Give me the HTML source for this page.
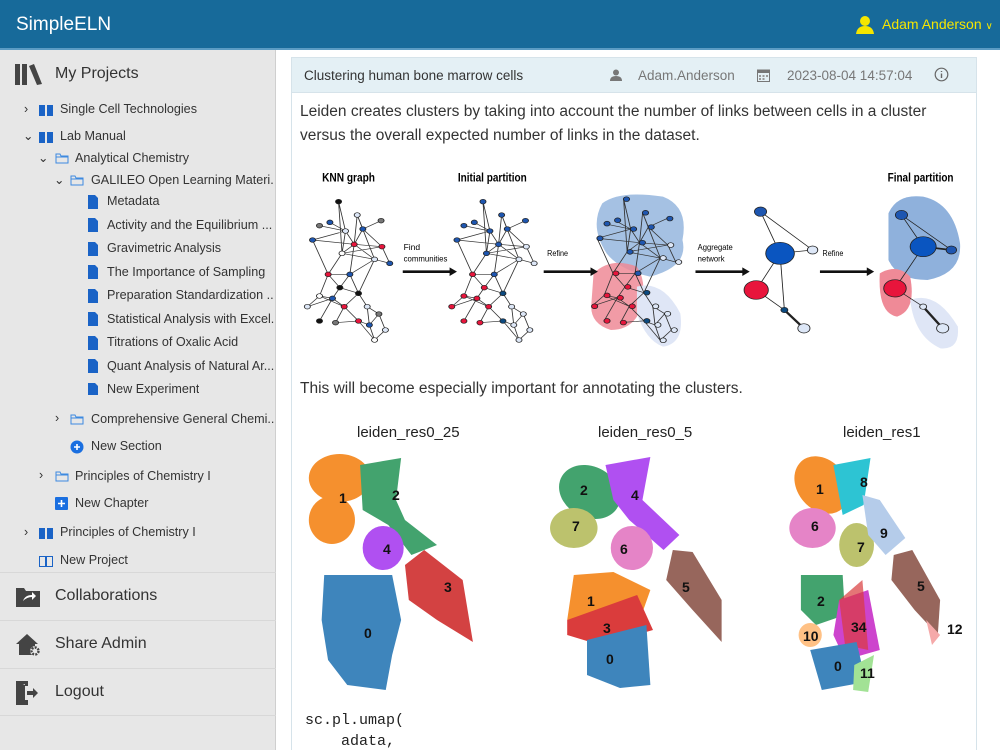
<!DOCTYPE html>
<html><head><meta charset="utf-8"><style>
*{box-sizing:border-box;margin:0;padding:0}
html,body{width:1000px;height:750px;overflow:hidden}
body{font-family:"Liberation Sans",sans-serif;background:#fff;position:relative}
.hdr{position:absolute;left:0;top:0;width:1000px;height:50px;background:#176a9a;border-bottom:2px solid #5b9cc4}
.hdr .t{position:absolute;left:16px;top:14px;color:#fff;font-size:19px}
.hdr .u{position:absolute;top:16px;color:#f5e600;font-size:14px;white-space:nowrap}
.side{position:absolute;left:0;top:50px;width:276px;height:700px;background:#e7e7e7;border-right:1px solid #cfcfcf}
.it{position:absolute;font-size:12.6px;color:#333;white-space:nowrap;overflow:hidden;max-width:calc(274px - var(--l,0px))}
.big{position:absolute;left:0;width:276px;height:48px;border-top:1px solid #d8d8d8;font-size:16px;color:#333}
.big span{position:absolute;left:55px;top:14px}
.card{position:absolute;left:291px;top:57px;width:686px;height:693px;border:1px solid #d6e3ea;border-bottom:none}
.ch{height:35px;background:#e4f0f5;border-bottom:1px solid #d6e3ea;font-size:13.5px;color:#333;position:relative}
.ch span{position:absolute;top:10px}
p.x{position:absolute;left:300px;font-size:15.5px;color:#333;line-height:24px}
.lt{position:absolute;font-size:15px;color:#222;top:424px}
</style></head><body>
<div class="hdr"><div class="t">SimpleELN</div>
<svg style="position:absolute;left:855px;top:15px" width="20" height="20" viewBox="0 0 20 20"><circle cx="10" cy="6" r="5" fill="#f5e600"/><path d="M1 19 Q2 11 10 11 Q18 11 19 19Z" fill="#f5e600"/></svg>
<div class="u" style="left:882px">Adam Anderson <span style="font-size:10px">&#8744;</span></div></div>

<div class="side">
<svg style="position:absolute;left:15px;top:13px" width="28" height="22" viewBox="0 0 28 22"><rect x="0" y="1" width="5" height="21" fill="#444"/><rect x="7" y="1" width="5" height="21" fill="#444"/><path d="M14 3 L19 1 L27 21 L22 22Z" fill="#444"/></svg>
<div class="it" style="left:55px;top:15px;font-size:16px">My Projects</div>
</div>
<div class="it" style="left:24px;top:102px">›</div>
<svg style="position:absolute;left:39px;top:104px" width="14" height="12"><path d="M0 1 h6 v11 h-6z M8 1 h6 v11 h-6z" fill="#1a63c6"/></svg>
<div class="it" style="left:60px;top:102px">Single Cell Technologies</div>
<div class="it" style="left:23px;top:128px">⌄</div>
<svg style="position:absolute;left:39px;top:131px" width="14" height="12"><path d="M0 1 h6 v11 h-6z M8 1 h6 v11 h-6z" fill="#1a63c6"/></svg>
<div class="it" style="left:60px;top:129px">Lab Manual</div>
<div class="it" style="left:38px;top:150px">⌄</div>
<svg style="position:absolute;left:55px;top:152px" width="14" height="12"><path d="M1 2h4l1 2h7v7h-12z M1 5h12" fill="none" stroke="#3d8ae0"/></svg>
<div class="it" style="left:75px;top:151px">Analytical Chemistry</div>
<div class="it" style="left:54px;top:172px">⌄</div>
<svg style="position:absolute;left:70px;top:174px" width="14" height="12"><path d="M1 2h4l1 2h7v7h-12z M1 5h12" fill="none" stroke="#3d8ae0"/></svg>
<div class="it" style="left:91px;top:173px;--l:91px">GALILEO Open Learning Materi...</div>

<svg style="position:absolute;left:87px;top:195px" width="12" height="200">
<g fill="#1a63c6"><path d="M1 0h7l3 3v11h-10z"/><path d="M1 23h7l3 3v11h-10z"/><path d="M1 47h7l3 3v11h-10z"/><path d="M1 70h7l3 3v11h-10z"/><path d="M1 94h7l3 3v11h-10z"/><path d="M1 117h7l3 3v11h-10z"/><path d="M1 141h7l3 3v11h-10z"/><path d="M1 164h7l3 3v11h-10z"/><path d="M1 188h7l3 3v11h-10z"/></g></svg>
<div class="it" style="left:107px;top:194px;--l:107px">Metadata</div>
<div class="it" style="left:107px;top:218px;--l:107px">Activity and the Equilibrium ...</div>
<div class="it" style="left:107px;top:241px;--l:107px">Gravimetric Analysis</div>
<div class="it" style="left:107px;top:265px;--l:107px">The Importance of Sampling</div>
<div class="it" style="left:107px;top:288px;--l:107px">Preparation Standardization ...</div>
<div class="it" style="left:107px;top:312px;--l:107px">Statistical Analysis with Excel...</div>
<div class="it" style="left:107px;top:335px;--l:107px">Titrations of Oxalic Acid</div>
<div class="it" style="left:107px;top:359px;--l:107px">Quant Analysis of Natural Ar...</div>
<div class="it" style="left:107px;top:382px;--l:107px">New Experiment</div>
<div class="it" style="left:55px;top:411px">›</div>
<svg style="position:absolute;left:70px;top:413px" width="14" height="12"><path d="M1 2h4l1 2h7v7h-12z M1 5h12" fill="none" stroke="#3d8ae0"/></svg>
<div class="it" style="left:91px;top:412px;--l:91px">Comprehensive General Chemi...</div>
<svg style="position:absolute;left:70px;top:440px" width="14" height="14"><circle cx="7" cy="7" r="6.5" fill="#1a6fe0"/><path d="M7 4v6M4 7h6" stroke="#fff" stroke-width="1.6"/></svg>
<div class="it" style="left:91px;top:439px">New Section</div>
<div class="it" style="left:39px;top:468px">›</div>
<svg style="position:absolute;left:55px;top:470px" width="14" height="12"><path d="M1 2h4l1 2h7v7h-12z M1 5h12" fill="none" stroke="#3d8ae0"/></svg>
<div class="it" style="left:75px;top:469px">Principles of Chemistry I</div>
<svg style="position:absolute;left:55px;top:497px" width="13" height="13"><rect width="13" height="13" rx="1" fill="#1a6fe0"/><path d="M6.5 3v7M3 6.5h7" stroke="#fff" stroke-width="1.6"/></svg>
<div class="it" style="left:75px;top:496px">New Chapter</div>
<div class="it" style="left:24px;top:525px">›</div>
<svg style="position:absolute;left:39px;top:527px" width="14" height="12"><path d="M0 1 h6 v11 h-6z M8 1 h6 v11 h-6z" fill="#1a63c6"/></svg>
<div class="it" style="left:60px;top:525px">Principles of Chemistry I</div>
<svg style="position:absolute;left:39px;top:555px" width="14" height="12"><path d="M0.5 1.5 h6 v10 h-6z M7.5 1.5 h6 v10 h-6z" fill="none" stroke="#1a63c6"/></svg>
<div class="it" style="left:60px;top:553px">New Project</div>

<div class="big" style="top:572px"><svg style="position:absolute;left:16px;top:13px" width="24" height="21"><path d="M0 2h8l2 3h14v16h-24z" fill="#444"/><path d="M7 15 q2-6 9-6 v-3 l4 4-4 4v-3q-5 0-9 4z" fill="#fff"/></svg><span>Collaborations</span></div>
<div class="big" style="top:620px"><svg style="position:absolute;left:16px;top:12px" width="26" height="24"><path d="M0 11 L11 1 L22 11 H19 V22 H3 V11Z" fill="#444"/><circle cx="19" cy="18" r="5" fill="#e7e7e7"/><circle cx="19" cy="18" r="3.5" fill="none" stroke="#444" stroke-width="2.4" stroke-dasharray="2 1.2"/></svg><span>Share Admin</span></div>
<div class="big" style="top:668px;border-bottom:1px solid #d8d8d8"><svg style="position:absolute;left:16px;top:12px" width="24" height="24"><path d="M0 0h12v5h-3v-2h-6v18h6v-2h3v5h-12z" fill="#444"/><path d="M2 1l7 3v19l-7-1z" fill="#444"/><path d="M11 10h6v-3l5 5-5 5v-3h-6z" fill="#444"/></svg><span>Logout</span></div>

<div class="card"><div class="ch">
<span style="left:12px">Clustering human bone marrow cells</span>
<svg style="position:absolute;left:318px;top:11px" width="12" height="12"><circle cx="6" cy="3.5" r="3" fill="#777"/><path d="M0 12q0-5 6-5 6 0 6 5z" fill="#777"/></svg>
<span style="left:346px;color:#777">Adam.Anderson</span>
<svg style="position:absolute;left:465px;top:10px" width="13" height="14"><rect x="0.5" y="2" width="12" height="11.5" fill="none" stroke="#777"/><rect x="0.5" y="2" width="12" height="3" fill="#777"/><g fill="#999"><rect x="2" y="7" width="2" height="2"/><rect x="5.5" y="7" width="2" height="2"/><rect x="9" y="7" width="2" height="2"/><rect x="2" y="10" width="2" height="2"/><rect x="5.5" y="10" width="2" height="2"/></g></svg>
<span style="left:495px;color:#777">2023-08-04 14:57:04</span>
<svg style="position:absolute;left:642px;top:9px" width="15" height="15"><circle cx="7.5" cy="7.5" r="6.3" fill="none" stroke="#666" stroke-width="1.2"/><path d="M7.5 6.5v4.5M7.5 4v1" stroke="#666" stroke-width="1.4"/></svg>
</div></div>

<p class="x" style="top:100px">Leiden creates clusters by taking into account the number of links between cells in a cluster<br>versus the overall expected number of links in the dataset.</p>
<p class="x" style="top:377px">This will become especially important for annotating the clusters.</p>

<svg style="position:absolute;left:290px;top:160px" width="680" height="200" viewBox="0 0 1568 600" preserveAspectRatio="none">
<defs><g id="ed" stroke="#333" stroke-width="2" fill="none">
<path d="M112 125L128 213L148 253L155 165L168 207L210 182M92 187L128 213L52 240L148 253L212 260L168 207L148 253L195 298L230 310L212 260M68 197L128 213L120 280L148 253L138 343L88 343L120 280L195 298L138 343L115 383L88 343L68 408L98 415L115 383L158 400L138 343M40 440L68 408L125 440L98 415L68 483M125 440L105 488L158 483L125 440L158 400L178 440L205 462L220 510L195 540L158 483L183 495L205 462M178 440L183 495L195 540M112 125L120 280M155 165L195 298M52 240L88 343M212 260L120 280M40 440L98 415M158 400L195 298"/></g></defs>
<g font-family="Liberation Sans" font-weight="bold" font-size="36">
<text x="74" y="65" textLength="122" lengthAdjust="spacingAndGlyphs">KNN graph</text>
<text x="387" y="65" textLength="159" lengthAdjust="spacingAndGlyphs">Initial partition</text>
<text x="1378" y="65" textLength="152" lengthAdjust="spacingAndGlyphs">Final partition</text></g>
<use href="#ed"/><use href="#ed" x="333"/>
<path d="M720 130Q760 90 860 110Q920 140 905 240Q920 320 830 350Q760 330 730 280Q690 200 720 130Z" fill="#8fb1dc" opacity=".8"/>
<path d="M700 340Q740 290 800 320Q830 380 800 470Q780 510 740 510Q690 490 695 430Z" fill="#ef8a97" opacity=".85"/>
<path d="M800 380Q860 360 900 460Q910 550 860 560Q820 540 800 460Z" fill="#dfe6f6"/>
<g transform="translate(655,-10) scale(1.02)"><use href="#ed"/></g>
<path d="M260 335H370" stroke="#111" stroke-width="8"/><path d="M368 322L385 335L368 348Z" fill="#111"/>
<path d="M585 335H695" stroke="#111" stroke-width="8"/><path d="M693 322L710 335L693 348Z" fill="#111"/>
<path d="M935 335H1045" stroke="#111" stroke-width="8"/><path d="M1043 322L1060 335L1043 348Z" fill="#111"/>
<path d="M1222 335H1332" stroke="#111" stroke-width="8"/><path d="M1330 322L1347 335L1330 348Z" fill="#111"/>
<g font-size="24" font-family="Liberation Sans"><text x="262" y="270" textLength="38" lengthAdjust="spacingAndGlyphs">Find</text><text x="262" y="305" textLength="101" lengthAdjust="spacingAndGlyphs">communities</text><text x="593" y="288" textLength="48" lengthAdjust="spacingAndGlyphs">Refine</text><text x="940" y="270" textLength="81" lengthAdjust="spacingAndGlyphs">Aggregate</text><text x="940" y="305" textLength="62" lengthAdjust="spacingAndGlyphs">network</text><text x="1228" y="288" textLength="48" lengthAdjust="spacingAndGlyphs">Refine</text></g>
<g stroke="#222" stroke-width="2">
<circle cx="112" cy="125" r="7" fill="#111"/><circle cx="155" cy="165" r="7" fill="#dde7f7"/><circle cx="210" cy="182" r="7" fill="#777"/><circle cx="92" cy="187" r="7" fill="#1e56b0"/><circle cx="68" cy="197" r="7" fill="#777"/><circle cx="128" cy="213" r="7" fill="#dde7f7"/><circle cx="168" cy="207" r="7" fill="#1e56b0"/><circle cx="52" cy="240" r="7" fill="#1e56b0"/><circle cx="148" cy="253" r="7" fill="#e8153c"/><circle cx="212" cy="260" r="7" fill="#e8153c"/><circle cx="120" cy="280" r="7" fill="#fff"/><circle cx="195" cy="298" r="7" fill="#dde7f7"/><circle cx="230" cy="310" r="7" fill="#1e56b0"/><circle cx="88" cy="343" r="7" fill="#e8153c"/><circle cx="138" cy="343" r="7" fill="#1e56b0"/><circle cx="115" cy="383" r="7" fill="#111"/><circle cx="158" cy="400" r="7" fill="#111"/><circle cx="68" cy="408" r="7" fill="#fff"/><circle cx="98" cy="415" r="7" fill="#1e56b0"/><circle cx="40" cy="440" r="7" fill="#dde7f7"/><circle cx="125" cy="440" r="7" fill="#e8153c"/><circle cx="178" cy="440" r="7" fill="#dde7f7"/><circle cx="205" cy="462" r="7" fill="#777"/><circle cx="68" cy="483" r="7" fill="#111"/><circle cx="105" cy="488" r="7" fill="#777"/><circle cx="158" cy="483" r="7" fill="#e8153c"/><circle cx="183" cy="495" r="7" fill="#1e56b0"/><circle cx="220" cy="510" r="7" fill="#dde7f7"/><circle cx="195" cy="540" r="7" fill="#fff"/>
</g>
<g id="pn" stroke="#222" stroke-width="2" transform="translate(333,0)" fill="#1e56b0">
<circle cx="112" cy="125" r="7"/><circle cx="155" cy="165" r="7"/><circle cx="210" cy="182" r="7"/><circle cx="92" cy="187" r="7"/><circle cx="68" cy="197" r="7"/><circle cx="128" cy="213" r="7"/><circle cx="168" cy="207" r="7"/><circle cx="52" cy="240" r="7"/><circle cx="148" cy="253" r="7"/><circle cx="212" cy="260" r="7" fill="#dde7f7"/><circle cx="120" cy="280" r="7"/><circle cx="195" cy="298" r="7" fill="#dde7f7"/><circle cx="230" cy="310" r="7" fill="#dde7f7"/><circle cx="88" cy="343" r="7" fill="#e8153c"/><circle cx="138" cy="343" r="7"/><circle cx="115" cy="383" r="7" fill="#e8153c"/><circle cx="158" cy="400" r="7" fill="#0c4a80"/><circle cx="68" cy="408" r="7" fill="#e8153c"/><circle cx="98" cy="415" r="7" fill="#e8153c"/><circle cx="40" cy="440" r="7" fill="#e8153c"/><circle cx="125" cy="440" r="7" fill="#e8153c"/><circle cx="178" cy="440" r="7" fill="#dde7f7"/><circle cx="205" cy="462" r="7" fill="#dde7f7"/><circle cx="68" cy="483" r="7" fill="#e8153c"/><circle cx="105" cy="488" r="7" fill="#e8153c"/><circle cx="158" cy="483" r="7" fill="#0c4a80"/><circle cx="183" cy="495" r="7" fill="#dde7f7"/><circle cx="220" cy="510" r="7" fill="#dde7f7"/><circle cx="195" cy="540" r="7" fill="#dde7f7"/>
</g>
<g transform="translate(322,-10) scale(1.02)"><use href="#pn"/></g>
<g stroke="#222" stroke-width="2"><path d="M1085 155L1130 280L1205 270Z M1130 280L1075 390L1140 450L1185 505M1130 280L1140 450" fill="none"/><path d="M1140 450L1185 505" stroke-width="6"/></g>
<circle cx="1085" cy="155" r="14" fill="#1e56b0" stroke="#222" stroke-width="2"/><circle cx="1130" cy="280" r="33" fill="#0a55c0" stroke="#222" stroke-width="2"/><circle cx="1205" cy="270" r="12" fill="#dde7f7" stroke="#222" stroke-width="2"/><circle cx="1075" cy="390" r="28" fill="#e8153c" stroke="#222" stroke-width="2"/><circle cx="1140" cy="450" r="8" fill="#0c4a80" stroke="#222" stroke-width="2"/><circle cx="1185" cy="505" r="14" fill="#dde7f7" stroke="#222" stroke-width="2"/>
<path d="M1380 160Q1400 100 1460 110Q1530 130 1545 250Q1550 340 1470 360Q1400 360 1380 300Z" fill="#8fb1dc"/>
<path d="M1360 340Q1400 310 1430 350Q1445 450 1400 470Q1355 460 1360 340Z" fill="#ef8a97"/>
<path d="M1430 420Q1490 390 1540 500Q1545 570 1500 565Q1440 530 1430 420Z" fill="#dfe6f6"/>
<g stroke="#222" stroke-width="2" fill="none"><path d="M1410 165L1460 260L1525 270Z M1460 260L1395 385L1460 440"/><path d="M1460 440L1505 505" stroke-width="6"/><path d="M1460 260L1525 270" stroke-width="5"/></g>
<circle cx="1410" cy="165" r="14" fill="#1e56b0" stroke="#222" stroke-width="2"/><circle cx="1460" cy="260" r="30" fill="#0a55c0" stroke="#222" stroke-width="2"/><circle cx="1525" cy="270" r="12" fill="#1e56b0" stroke="#222" stroke-width="2"/><circle cx="1395" cy="385" r="26" fill="#e8153c" stroke="#222" stroke-width="2"/><circle cx="1460" cy="440" r="8" fill="#dde7f7" stroke="#222" stroke-width="2"/><circle cx="1505" cy="505" r="14" fill="#dde7f7" stroke="#222" stroke-width="2"/>
</svg>

<div class="lt" style="left:357px">leiden_res0_25</div>
<div class="lt" style="left:598px">leiden_res0_5</div>
<div class="lt" style="left:843px">leiden_res1</div>
<svg style="position:absolute;left:300px;top:420px" width="670" height="280" viewBox="0 0 670 280">
<g opacity=".9">
<g transform="matrix(1.282 0 0 1 -4 0)">
<ellipse cx="34" cy="58" rx="24" ry="24" fill="#f58518"/><ellipse cx="28" cy="100" rx="18" ry="24" fill="#f58518"/>
<path d="M50 45L82 38L78 80L85 100L110 125L90 135L72 105L52 90Z" fill="#2f9a5f"/>
<ellipse cx="68" cy="128" rx="16" ry="22" fill="#a83ef0"/>
<path d="M85 145L100 130L130 160L138 222L110 200L88 180Z" fill="#cf2e2e"/>
<path d="M22 155L75 155L82 200L75 235L70 270L40 265L25 240L20 200Z" fill="#2a78b5"/>
</g>
<g transform="matrix(1.32 0 0 1 -3.4 0)">
<ellipse cx="222" cy="72" rx="22" ry="28" fill="#2f9a5f" transform="rotate(-25 222 72)"/>
<path d="M234 45L268 37L262 80L290 115L278 130L252 100L240 80Z" fill="#a83ef0"/>
<ellipse cx="210" cy="108" rx="18" ry="20" fill="#b5bc5e"/>
<ellipse cx="254" cy="128" rx="16" ry="22" fill="#e377c2"/>
<path d="M285 130L300 132L322 180L322 222L300 190L280 160Z" fill="#8c564b"/>
<path d="M210 155L240 152L268 170L260 200L205 200Z" fill="#f58518"/>
<path d="M205 200L258 175L270 210L230 225L205 215Z" fill="#d62728"/>
<path d="M220 220L265 205L268 265L245 268L220 255Z" fill="#2a78b5"/>
</g>
<g transform="matrix(1.16 0 0 1 46.2 0)">
<ellipse cx="410" cy="65" rx="22" ry="30" fill="#f58518" transform="rotate(-25 410 65)"/>
<path d="M420 45L452 38L446 85L428 95Z" fill="#17becf"/>
<ellipse cx="402" cy="108" rx="20" ry="20" fill="#e377c2"/>
<ellipse cx="440" cy="125" rx="15" ry="22" fill="#b5bc5e"/>
<path d="M445 75L460 80L482 118L465 135L450 115Z" fill="#aec7e8"/>
<path d="M472 135L488 130L512 180L510 215L490 190L470 160Z" fill="#8c564b"/>
<path d="M500 200L512 215L505 225Z" fill="#f4a0a0"/>
<path d="M392 155L428 155L430 195L405 205L392 190Z" fill="#2f9a5f"/>
<path d="M425 180L450 170L460 230L430 240L420 215Z" fill="#c830c8"/>
<path d="M425 180L445 160L450 230L430 225Z" fill="#d62728" opacity=".7"/>
<ellipse cx="400" cy="215" rx="10" ry="12" fill="#ffbb78"/>
<path d="M400 230L440 222L448 262L410 270Z" fill="#2a78b5"/>
<path d="M438 245L455 235L450 272L437 270Z" fill="#98df8a"/>
</g>
</g>
<g font-family="Liberation Sans" font-size="14" font-weight="bold" fill="#111">
<text x="39" y="83">1</text><text x="92" y="80">2</text><text x="83" y="134">4</text><text x="144" y="172">3</text><text x="64" y="218">0</text>
<text x="280" y="75">2</text><text x="331" y="80">4</text><text x="272" y="111">7</text><text x="320" y="134">6</text><text x="382" y="172">5</text><text x="287" y="186">1</text><text x="303" y="213">3</text><text x="306" y="244">0</text>
<text x="516" y="74">1</text><text x="560" y="67">8</text><text x="511" y="111">6</text><text x="580" y="118">9</text><text x="557" y="132">7</text><text x="617" y="171">5</text><text x="517" y="186">2</text><text x="551" y="212">34</text><text x="647" y="214">12</text><text x="503" y="221">10</text><text x="534" y="251">0</text><text x="560" y="258">11</text>
</g>
</svg>

<div style="position:absolute;left:305px;top:710px;font-family:'Liberation Mono',monospace;font-size:15px;line-height:21px;color:#222;white-space:pre">sc.pl.umap(
    adata,</div>
</body></html>
